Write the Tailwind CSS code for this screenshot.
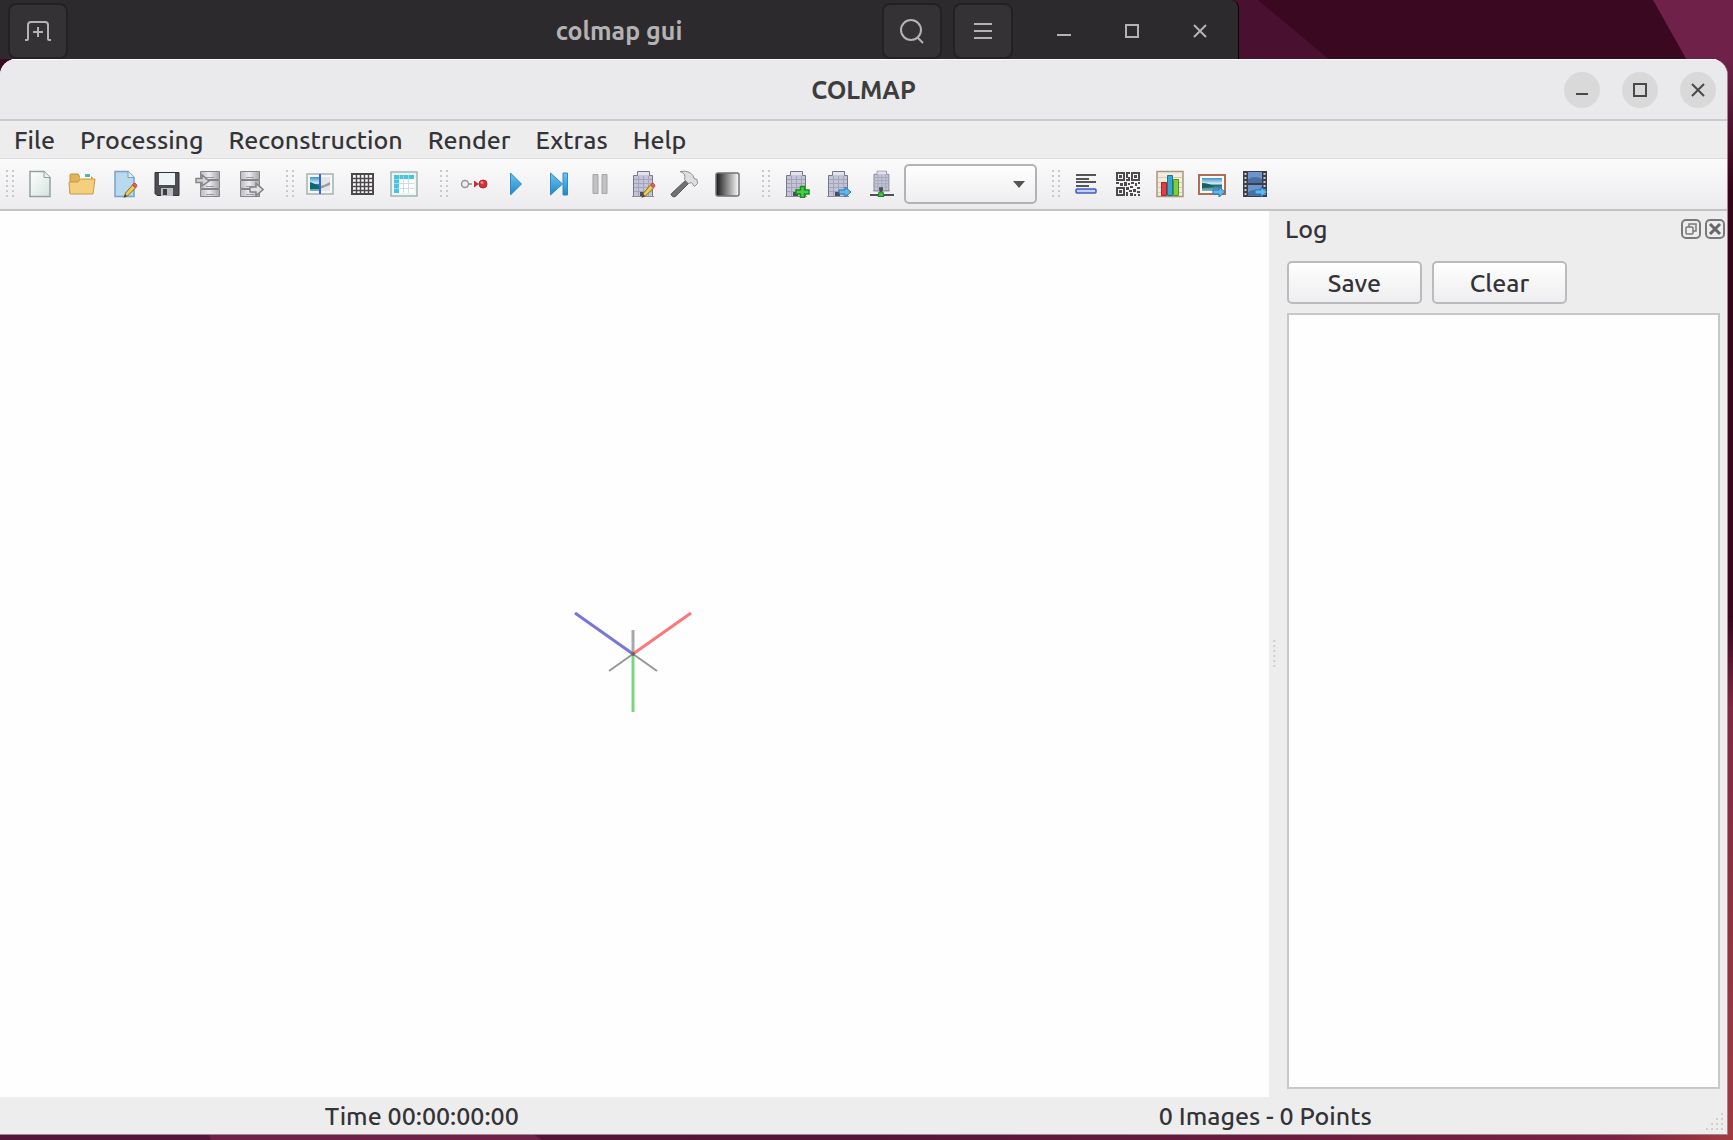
<!doctype html>
<html lang="en">
<head>
  <meta charset="UTF-8">
  <meta name="viewport" content="width=device-width, initial-scale=1.0">
  <title>COLMAP</title>
  <script src="https://cdn.jsdelivr.net/npm/@tailwindcss/browser@4"></script>
</head>
<body class="bg-[#3a0821] h-screen overflow-hidden relative flex flex-col font-['Ubuntu','Noto_Sans',sans-serif] font-medium text-[25px] leading-7 text-[#343438]">

<!-- Wallpaper -->
<svg class="absolute inset-0 w-full h-full" viewBox="0 0 1733 1140" preserveAspectRatio="none" aria-hidden="true">
  <defs>
    <linearGradient id="edge" x1="0" y1="0" x2="0" y2="1"><stop offset="0" stop-color="#6f2148"/><stop offset=".12" stop-color="#360419"/><stop offset=".52" stop-color="#3c0820"/><stop offset=".6" stop-color="#842744"/><stop offset="1" stop-color="#a33a3f"/></linearGradient>
    <linearGradient id="floor" x1="0" y1="0" x2="1" y2="0"><stop offset="0" stop-color="#54153a"/><stop offset=".5" stop-color="#561437"/><stop offset=".93" stop-color="#7a2144"/><stop offset="1" stop-color="#a33a3f"/></linearGradient>
  </defs>
  <path fill="#3a0820" d="M0 0h1733v1140H0z"/>
  <path fill="#4a1030" d="M1230 0h28l72 60h-100z"/>
  <path fill="#702149" d="M1653 0h80v110h-18z"/>
  <path fill="url(#edge)" d="M1726 60h7v1080h-7z"/>
  <path fill="url(#floor)" d="M0 1132h1733v8H0z"/>
  <path fill="#702149" d="M208 1132h322l12 8H211z"/>
</svg>

<!-- Icon parts used more than once -->
<svg class="absolute w-0 h-0" aria-hidden="true">
  <defs>
    <linearGradient id="steel" x1="0" y1="0" x2="1" y2="0"><stop offset="0" stop-color="#b9bac0"/><stop offset=".45" stop-color="#ececf2"/><stop offset="1" stop-color="#a4a4ac"/></linearGradient>
    <linearGradient id="sky" x1="0" y1="0" x2="0" y2="1"><stop offset="0" stop-color="#6ec5ee"/><stop offset="1" stop-color="#1f86cc"/></linearGradient>
    <linearGradient id="scene" x1="0" y1="0" x2="0" y2="1"><stop offset="0" stop-color="#3f93d0"/><stop offset=".45" stop-color="#d8edf5"/><stop offset=".55" stop-color="#256b75"/><stop offset="1" stop-color="#7db6c9"/></linearGradient>
    <linearGradient id="paper" x1="0" y1="0" x2="1" y2="1"><stop offset="0" stop-color="#fff"/><stop offset="1" stop-color="#d4e3df"/></linearGradient>
    <symbol id="building" viewBox="0 0 28 28">
      <path fill="#c3c4d6" stroke="#77778a" d="M6.500 1.500h12v4h3v21h-19v-21h4z"/>
      <path fill="#e2e2ef" d="M7 2h11v3H7z"/>
      <path stroke="#a3a4b9" fill="none" d="M3 9.500h18M3 13.500h18M3 17.500h18M3 21.500h18M7.500 6v20M12.500 6v20M17.500 6v20"/>
      <path fill="#4d4e5c" d="M9 22h5v5H9z"/><path fill="#8e8f9e" d="M1 26h22v1H1z"/>
    </symbol>
    <symbol id="pencil" viewBox="0 0 14 16">
      <path fill="#f1cc45" stroke="#84682a" d="M1 15l1-4 7-8 3 3-8 8z"/>
      <path fill="#e95a65" stroke="#c34853" d="M9 3l1-1.500q2-1 3 1t-.5 3z"/><path fill="#444" d="M0 16l1.500-4 2 2z"/>
    </symbol>
    <symbol id="arrow" viewBox="0 0 14 12">
      <path fill="#5fb9ee" stroke="#2377b4" d="M1 4h6V1l6 5-6 5V8H1z"/>
    </symbol>
    <symbol id="cabinet" viewBox="0 0 20 28">
      <path fill="url(#steel)" stroke="#858587" d="M.5 1.500h19v8H.5zM.5 10.500h19v8H.5zM.5 19.500h19v7H.5z"/>
      <path fill="none" stroke="#9a9c9d" d="M6 7.500h8M6 16.500h8M6 24.500h8"/>
    </symbol>
    <symbol id="grip" viewBox="0 0 8 28">
      <path fill="none" stroke="#c9c8cc" stroke-width="2" stroke-dasharray="2 3" d="M1 0v28M7 0v28"/>
    </symbol>
  </defs>
</svg>

<!-- Terminal window behind -->
<header class="relative flex items-end h-[59px] w-[1239px] max-w-full shrink-0 bg-[#2c2a2d] rounded-tr-lg border-r border-black px-2 text-[#b4b3b4]">
  <h2 class="absolute inset-x-0 bottom-0 h-14 flex items-center justify-center font-bold pointer-events-none">colmap gui</h2>
  <button aria-label="New tab" class="w-[60px] h-14 mr-auto flex items-center justify-center rounded-lg border-2 border-[#232124] bg-[#343235]">
    <svg class="w-7 h-7" viewBox="0 0 28 28" fill="none" stroke="currentColor" stroke-width="2"><path d="M1 23h2q1 0 1-1V8q0-3 3-3h14q3 0 3 3v14q0 1 1 1h2M14 10v10M9 15h10"/></svg>
  </button>
  <button aria-label="Search" class="w-[60px] h-14 mr-[11px] flex items-center justify-center rounded-lg border-2 border-[#232124] bg-[#343235]">
    <svg class="w-7 h-7" viewBox="0 0 28 28" fill="none" stroke="currentColor" stroke-width="2"><circle cx="13" cy="13" r="10"/><path d="M19 20l6 6"/></svg>
  </button>
  <button aria-label="Menu" class="w-[60px] h-14 flex items-center justify-center rounded-lg border-2 border-[#232124] bg-[#343235]">
    <svg class="w-5 h-5" viewBox="0 0 20 20" fill="none" stroke="currentColor" stroke-width="2"><path d="M1 3h18M1 10h18M1 17h18"/></svg>
  </button>
  <div class="flex h-14 items-center gap-12 pl-[41px] pr-5">
    <button aria-label="Minimize"><svg class="w-5 h-5" viewBox="0 0 20 20" fill="none" stroke="currentColor" stroke-width="2"><path d="M3 14h14"/></svg></button>
    <button aria-label="Maximize"><svg class="w-5 h-5" viewBox="0 0 20 20" fill="none" stroke="currentColor" stroke-width="2"><path d="M4 4h12v12H4z"/></svg></button>
    <button aria-label="Close"><svg class="w-5 h-5" viewBox="0 0 20 20" fill="none" stroke="currentColor" stroke-width="2"><path d="M4 4l12 12M16 4L4 16"/></svg></button>
  </div>
</header>

<!-- COLMAP window -->
<div class="relative flex-1 min-h-0 mr-[5px] mb-[5px] flex flex-col bg-[#eeedee] rounded-t-2xl border-r border-b border-[#9b8790] overflow-hidden">
  <div class="relative h-[62px] shrink-0 flex items-center justify-end gap-[22px] pr-[11px] bg-[#eae9eb] border-t border-t-white border-b-2 border-b-[#cccbcd]">
    <h1 class="absolute inset-x-0 text-center font-bold text-[#3d3d3d] pointer-events-none">COLMAP</h1>
    <button aria-label="Minimize" class="w-9 h-9 rounded-full bg-[#dad9da] flex items-center justify-center"><svg class="w-5 h-5" viewBox="0 0 20 20" fill="none" stroke="#4a494a" stroke-width="2"><path d="M4 14h12"/></svg></button>
    <button aria-label="Maximize" class="w-9 h-9 rounded-full bg-[#dad9da] flex items-center justify-center"><svg class="w-5 h-5" viewBox="0 0 20 20" fill="none" stroke="#4a494a" stroke-width="2"><path d="M4 4h12v12H4z"/></svg></button>
    <button aria-label="Close" class="w-9 h-9 rounded-full bg-[#dad9da] flex items-center justify-center"><svg class="w-5 h-5" viewBox="0 0 20 20" fill="none" stroke="#4a494a" stroke-width="2"><path d="M4 4l12 12M16 4L4 16"/></svg></button>
  </div>

  <nav class="h-[38px] shrink-0 flex items-center gap-[25px] px-[14px] border-b border-[#dcdbdd]">
    <button>File</button>
    <button>Processing</button>
    <button>Reconstruction</button>
    <button>Render</button>
    <button>Extras</button>
    <button>Help</button>
  </nav>

  <div class="h-[52px] shrink-0 flex items-center gap-[10px] pl-px bg-linear-to-b from-[#fcfbfc] to-[#ecebed] border-b-2 border-[#c3c2c4]">
    <div class="flex items-center">
      <svg class="w-2 h-7 mx-[5px]"><use href="#grip"/></svg>
      <button aria-label="New project" class="w-[42px] h-10 flex items-center justify-center">
        <svg class="w-7 h-7" viewBox="0 0 28 28"><path fill="url(#paper)" stroke="#93a29e" stroke-width="1.500" d="M4 1.500h14l6 6v19H4z"/><path fill="#e9f1ee" stroke="#93a29e" d="M18 1.500v6h6"/></svg>
      </button>
      <button aria-label="Open project" class="w-[42px] h-10 flex items-center justify-center">
        <svg class="w-7 h-7" viewBox="0 0 28 28"><path fill="#e0b458" stroke="#bd9140" d="M2 23V5q0-1 1-1h7l2 3h12v16z"/><path fill="#fff" d="M12 4h11v5H12z"/><path fill="#58b5aa" d="M17 4h5v3h-5z"/><path fill="#f4cf7d" stroke="#c69a4a" d="M1 13q0-1 1-1h8l2-3h15l-2 15H2z"/></svg>
      </button>
      <button aria-label="Edit project" class="w-[42px] h-10 flex items-center justify-center">
        <svg class="w-7 h-7" viewBox="0 0 28 28"><path fill="#b9d9ef" stroke="#7ba1c3" stroke-width="1.500" d="M5 1.500h13l6 6v19H5z"/><path fill="#e0eff8" stroke="#7ba1c3" d="M18 1.500v6h6"/><use href="#pencil" x="13" y="12" width="15" height="16"/></svg>
      </button>
      <button aria-label="Save project" class="w-[42px] h-10 flex items-center justify-center">
        <svg class="w-7 h-7" viewBox="0 0 28 28"><path fill="#4d4d52" stroke="#343438" d="M3 2.500h24v23H5l-2-2z"/><path fill="#edf4f5" d="M7 3h16v12H7z"/><path fill="#b8bbc0" d="M9 18h12v8H9z"/><path fill="#3d3d41" d="M11 19h4v6h-4z"/></svg>
      </button>
      <button aria-label="Import model" class="w-[42px] h-10 flex items-center justify-center">
        <svg class="w-7 h-7" viewBox="0 0 28 28"><use href="#cabinet" x="6" y="0" width="20" height="28"/><path fill="#d2d2d4" stroke="#858587" stroke-width="1.500" d="M2 8.500h6V5l7 6-7 5v-3.500H2z"/></svg>
      </button>
      <button aria-label="Export model" class="w-[42px] h-10 flex items-center justify-center">
        <svg class="w-7 h-7" viewBox="0 0 28 28"><use href="#cabinet" x="4" y="0" width="20" height="28"/><path fill="#e2e2e4" stroke="#858587" stroke-width="1.500" d="M14 17h6v-3.500l7 6-7 6V22h-6z"/></svg>
      </button>
    </div>

    <div class="flex items-center">
      <svg class="w-2 h-7 mx-[5px]"><use href="#grip"/></svg>
      <button aria-label="Feature extraction" class="w-[42px] h-10 flex items-center justify-center">
        <svg class="w-7 h-7" viewBox="0 0 28 28"><path fill="#f5f7f7" stroke="#a5b3af" stroke-width="1.500" d="M1 4h26v20H1z"/><path fill="url(#scene)" d="M4 7h10v14H4z"/><path fill="#0f6570" d="M4 12q6 2 10 5v2H4z"/><path fill="#e4e5e6" d="M14 7h10v14H14z"/><path fill="#9b9da0" d="M14 16q5-1 10-4v3l-10 4z"/><path fill="#3465c9" d="M13 4h2v20h-2z"/></svg>
      </button>
      <button aria-label="Feature matching" class="w-[42px] h-10 flex items-center justify-center">
        <svg class="w-7 h-7" viewBox="0 0 28 28"><path fill="#fff" stroke="#4c484c" stroke-width="2" d="M4 4h21v20H4z"/><path fill="none" stroke="#4c484c" stroke-width="1.500" d="M8.500 4v20M12.500 4v20M16.500 4v20M20.500 4v20M4 8.500h21M4 12.500h21M4 16.500h21M4 20.500h21"/></svg>
      </button>
      <button aria-label="Database management" class="w-[42px] h-10 flex items-center justify-center">
        <svg class="w-7 h-7" viewBox="0 0 28 28"><path fill="#eef5f3" stroke="#a0b5b0" stroke-width="1.500" d="M1 2h26v24H1z"/><path fill="#fff" d="M4 5h20v18H4z"/><path fill="#45c4e4" d="M4 5h20v4H9v14H4z"/><path fill="none" stroke="#cfdfe0" d="M9 13.500h15M9 18.500h15M13.500 9v14M18.500 9v14"/><path fill="none" stroke="#8bdcee" d="M4 9.500h5M4 13.500h5M4 18.500h5M9.500 5v4M13.500 5v4M18.500 5v4"/></svg>
      </button>
    </div>

    <div class="flex items-center">
      <svg class="w-2 h-7 mx-[5px]"><use href="#grip"/></svg>
      <button aria-label="Automatic reconstruction" class="w-[42px] h-10 flex items-center justify-center">
        <svg class="w-7 h-7" viewBox="0 0 28 28"><circle cx="5" cy="14" r="3.500" fill="#f0eeee" stroke="#959293" stroke-width="1.500"/><path stroke="#a5a2a3" stroke-width="2" d="M9 14h3"/><path fill="#c43035" d="M14 10.500l5 3.500-5 3.500z"/><circle cx="23" cy="14" r="4" fill="#da3034" stroke="#b4242a"/><circle cx="22" cy="12.500" r="1.500" fill="#f18c8a"/></svg>
      </button>
      <button aria-label="Start reconstruction" class="w-[42px] h-10 flex items-center justify-center">
        <svg class="w-7 h-7" viewBox="0 0 28 28"><path fill="url(#sky)" stroke="#3189c2" d="M8.500 3l11 11-11 11z"/></svg>
      </button>
      <button aria-label="Reconstruct next image" class="w-[42px] h-10 flex items-center justify-center">
        <svg class="w-7 h-7" viewBox="0 0 28 28"><path fill="url(#sky)" stroke="#3189c2" d="M6.500 3l12 11-12 11zM19 3h4.500v22H19z"/></svg>
      </button>
      <button aria-label="Pause reconstruction" class="w-[42px] h-10 flex items-center justify-center">
        <svg class="w-7 h-7" viewBox="0 0 28 28"><path fill="#c2c1c3" stroke="#a5a4a6" d="M7 4.500h5v19H7zM16 4.500h5v19h-5z"/></svg>
      </button>
      <button aria-label="Reconstruction options" class="w-[42px] h-10 flex items-center justify-center">
        <svg class="w-7 h-7" viewBox="0 0 28 28"><use href="#building" x="3" y="0" width="28" height="28"/><use href="#pencil" x="13" y="12" width="15" height="16"/></svg>
      </button>
      <button aria-label="Bundle adjustment" class="w-[42px] h-10 flex items-center justify-center">
        <svg class="w-7 h-7" viewBox="0 0 28 28"><path fill="#717174" stroke="#5b5b5e" d="M2 23L17 9l3 3L6 26q-2 2-4 0t0-3z"/><path fill="#dededf" stroke="#8e8e91" d="M10 1.500q9-1.500 13 4l1 3 3 1 .5 4-3 3-3-4-3 1-4-4q2-6-4.500-8z"/></svg>
      </button>
      <button aria-label="Dense reconstruction" class="w-[42px] h-10 flex items-center justify-center">
        <svg class="w-7 h-7" viewBox="0 0 28 28"><defs><linearGradient id="shade"><stop offset="0" stop-color="#171717"/><stop offset="1" stop-color="#fff"/></linearGradient></defs><rect x="4" y="3" width="23" height="23" rx="2" fill="url(#shade)" stroke="#737274" stroke-width="1.500"/></svg>
      </button>
    </div>

    <div class="flex items-center">
      <svg class="w-2 h-7 mx-[5px]"><use href="#grip"/></svg>
      <button aria-label="Render options" class="w-[42px] h-10 flex items-center justify-center">
        <svg class="w-7 h-7" viewBox="0 0 28 28"><use href="#building" x="2" y="0" width="28" height="28"/><path fill="#43d143" stroke="#178d22" stroke-width="1.500" d="M18.500 16.500h4V20H27v4h-4.500v3.500h-4V24H14v-4h4.500z"/></svg>
      </button>
      <button aria-label="Show model" class="w-[42px] h-10 flex items-center justify-center">
        <svg class="w-7 h-7" viewBox="0 0 28 28"><use href="#building" x="2" y="0" width="28" height="28"/><use href="#arrow" x="14" y="16" width="14" height="12"/></svg>
      </button>
      <button aria-label="Merge models" class="w-[42px] h-10 flex items-center justify-center">
        <svg class="w-7 h-7" viewBox="0 0 28 28"><use href="#building" x="6" y="0" width="22" height="22"/><path fill="none" stroke="#4d5155" stroke-width="2" d="M4 25h24M15 20v4"/><path fill="#42be48" stroke="#207b2b" d="M13 22h4l1 4.500h-6z"/></svg>
      </button>
      <div class="relative ml-[3px] w-[133px] h-10">
        <select aria-label="Model" class="appearance-none w-full h-full rounded-[5px] border-2 border-[#b3b2b4] bg-linear-to-b from-white to-[#eeedef] px-3">
          <option></option>
        </select>
        <svg class="absolute right-3 top-4 w-3 h-2 pointer-events-none" viewBox="0 0 12 8"><path fill="#555356" d="M0 1h12L6 8z"/></svg>
      </div>
    </div>

    <div class="flex items-center">
      <svg class="w-2 h-7 mx-[5px]"><use href="#grip"/></svg>
      <button aria-label="Show log" class="w-[42px] h-10 flex items-center justify-center">
        <svg class="w-7 h-7" viewBox="0 0 28 28"><path fill="none" stroke="#555458" stroke-width="2" d="M4 5h20M4 9h13M4 12h20M4 16h13"/><rect x="4" y="19" width="20" height="4" rx="1" fill="#c3d0fb" stroke="#405bc2" stroke-width="1.500"/></svg>
      </button>
      <button aria-label="Match matrix" class="w-[42px] h-10 flex items-center justify-center">
        <svg class="w-7 h-7" viewBox="0 0 28 28"><path fill="none" stroke="#4d4b4e" stroke-width="2" d="M3 3h7v7H3zM18 3h7v7h-7zM3 18h7v7H3z"/><path fill="#4d4b4e" d="M5 5h3v3H5zM20 5h3v3h-3zM5 20h3v3H5zM12 2h4v2h-2v3h2v4h-4V9h2V8h-2zM2 12h3v2H2zM6 13h3v3H6zM10 12h3v4h-3zM14 13h2v2h-2zM17 12h3v2h-3zM21 13h2v3h-2zM24 12h2v2h-2zM12 17h3v3h-3zM16 16h3v2h-3zM19 19h3v3h-3zM23 17h3v2h-3zM15 20h3v2h-3zM12 22h2v4h-2zM16 23h3v3h-3zM20 24h2v2h-2zM23 21h3v2h-3zM24 24h2v2h-2z"/></svg>
      </button>
      <button aria-label="Model statistics" class="w-[42px] h-10 flex items-center justify-center">
        <svg class="w-7 h-7" viewBox="0 0 28 28"><path fill="#f4ecde" stroke="#a9977e" stroke-width="1.500" d="M1 1.500h26v25H1z"/><path stroke="#d7cab6" d="M2 7.500h24M2 12.500h24M2 17.500h24M2 22.500h24"/><path fill="#e73c3d" stroke="#aa2526" d="M5.500 12.500h5v13h-5z"/><path fill="#35a8cd" stroke="#1b7798" d="M11.500 5.500h5v20h-5z"/><path fill="#7fcf3d" stroke="#4e941d" d="M17.500 9.500h5v16h-5z"/></svg>
      </button>
      <button aria-label="Grab image" class="w-[42px] h-10 flex items-center justify-center">
        <svg class="w-7 h-7" viewBox="0 0 28 28"><path fill="#fff" stroke="#b06c54" stroke-width="2" d="M1 5h26v19H1z"/><path fill="url(#scene)" d="M4 8h20v13H4z"/><path fill="#17605e" d="M4 13q7 0 13 4l-13 1z"/><use href="#arrow" x="14" y="16" width="14" height="12"/></svg>
      </button>
      <button aria-label="Grab movie" class="w-[42px] h-10 flex items-center justify-center">
        <svg class="w-7 h-7" viewBox="0 0 28 28"><path fill="#3c3f49" d="M3 1h24v26H3z"/><path fill="#6e94cc" d="M8 2h14v11H8zM8 15h14v11H8z"/><path fill="#4c6ea3" d="M8 9q7-4 14 0v4H8zM8 22q7-4 14 0v4H8z"/><path fill="none" stroke="#c9ccd2" stroke-width="2" stroke-dasharray="2 2" d="M5.500 3v23M24.500 3v23"/><use href="#arrow" x="14" y="16" width="14" height="12"/></svg>
      </button>
    </div>
  </div>

  <div class="flex-1 min-h-0 flex">
    <main class="flex-1 min-w-0 flex items-center justify-center pr-1 bg-[#fefefe]">
      <!-- Model viewer axes -->
      <svg class="w-[120px] h-[120px]" viewBox="0 0 120 120" fill="none" stroke-width="3" role="img" aria-label="Coordinate axes">
        <path stroke="#a8a8a8" d="M60 60V36"/>
        <path stroke="#969696" stroke-width="2" d="M60 60l-24 17M60 60l24 17"/>
        <path stroke="#7676dc" d="M60 60L2 19"/>
        <path stroke="#fb7779" d="M60 60l58-41"/>
        <path stroke="#78d67f" d="M60 60v58"/>
        <circle cx="60" cy="60" r="2" fill="#666"/>
      </svg>
    </main>
    <div class="w-[10px] flex items-center justify-center cursor-col-resize">
      <svg class="w-[3px] h-7" viewBox="0 0 3 28"><path stroke="#d3d2d4" stroke-width="3" stroke-dasharray="2 3" d="M1 0v28"/></svg>
    </div>
    <aside class="w-[448px] flex flex-col pl-2 pr-[7px] pb-2">
      <div class="h-9 flex items-center justify-between -ml-[2px] -mr-[5px]">
        <h2>Log</h2>
        <div class="flex gap-1">
          <button aria-label="Float"><svg class="block w-5 h-5" viewBox="0 0 20 20" fill="none" stroke="#79787a" stroke-width="2"><rect x="1" y="1" width="18" height="18" rx="4"/><path stroke-width="1.500" d="M8 8V5h7v7h-3"/><rect x="5" y="8" width="7" height="7" rx="1" stroke-width="1.500"/></svg></button>
          <button aria-label="Close log"><svg class="block w-5 h-5" viewBox="0 0 20 20" fill="none" stroke="#79787a" stroke-width="2"><rect x="1" y="1" width="18" height="18" rx="4"/><path stroke="#666567" stroke-width="3" d="M5 5l10 10M15 5L5 15"/></svg></button>
        </div>
      </div>
      <div class="flex gap-[10px] mt-[14px]">
        <button class="w-[135px] h-[43px] rounded-[5px] border-2 border-[#bbbabc] bg-linear-to-b from-white to-[#eeedef]">Save</button>
        <button class="w-[135px] h-[43px] rounded-[5px] border-2 border-[#bbbabc] bg-linear-to-b from-white to-[#eeedef]">Clear</button>
      </div>
      <textarea aria-label="Log output" readonly class="flex-1 mt-[9px] resize-none bg-[#fefefe] border-2 border-[#c8c7c9] outline-none p-2"></textarea>
    </aside>
  </div>

  <footer class="relative h-[37px] shrink-0 flex items-center pr-10 text-center">
    <span class="flex-1">Time 00:00:00:00</span>
    <span class="flex-1">0 Images - 0 Points</span>
    <svg class="absolute right-0 bottom-0 w-6 h-6" viewBox="0 0 24 24" fill="#cfced0"><path d="M18 3h2v2h-2zM13 8h2v2h-2zM18 8h2v2h-2zM8 13h2v2H8zM13 13h2v2h-2zM18 13h2v2h-2zM3 18h2v2H3zM8 18h2v2H8zM13 18h2v2h-2zM18 18h2v2h-2z"/></svg>
  </footer>
</div>

</body>
</html>
